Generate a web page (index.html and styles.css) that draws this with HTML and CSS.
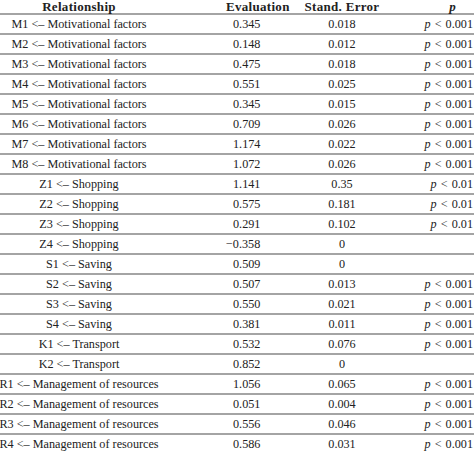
FILE: index.html
```html
<!DOCTYPE html>
<html>
<head>
<meta charset="utf-8">
<link rel="stylesheet" href="styles.css">
</head>
<body>
<div class="tbl">
  <div class="row head">
    <div class="c1"><span>Relationship</span></div>
    <div class="c2">Evaluation</div>
    <div class="c3"><span>Stand. Error</span></div>
    <div class="c4"><i>p</i></div>
  </div>
  <div class="row"><div class="c1"><span>M1 &lt;– Motivational factors</span></div><div class="c2">0.345</div><div class="c3"><span>0.018</span></div><div class="c4"><i>p</i> &lt; 0.001</div></div>
  <div class="row"><div class="c1"><span>M2 &lt;– Motivational factors</span></div><div class="c2">0.148</div><div class="c3"><span>0.012</span></div><div class="c4"><i>p</i> &lt; 0.001</div></div>
  <div class="row"><div class="c1"><span>M3 &lt;– Motivational factors</span></div><div class="c2">0.475</div><div class="c3"><span>0.018</span></div><div class="c4"><i>p</i> &lt; 0.001</div></div>
  <div class="row"><div class="c1"><span>M4 &lt;– Motivational factors</span></div><div class="c2">0.551</div><div class="c3"><span>0.025</span></div><div class="c4"><i>p</i> &lt; 0.001</div></div>
  <div class="row"><div class="c1"><span>M5 &lt;– Motivational factors</span></div><div class="c2">0.345</div><div class="c3"><span>0.015</span></div><div class="c4"><i>p</i> &lt; 0.001</div></div>
  <div class="row"><div class="c1"><span>M6 &lt;– Motivational factors</span></div><div class="c2">0.709</div><div class="c3"><span>0.026</span></div><div class="c4"><i>p</i> &lt; 0.001</div></div>
  <div class="row"><div class="c1"><span>M7 &lt;– Motivational factors</span></div><div class="c2">1.174</div><div class="c3"><span>0.022</span></div><div class="c4"><i>p</i> &lt; 0.001</div></div>
  <div class="row"><div class="c1"><span>M8 &lt;– Motivational factors</span></div><div class="c2">1.072</div><div class="c3"><span>0.026</span></div><div class="c4"><i>p</i> &lt; 0.001</div></div>
  <div class="row"><div class="c1"><span>Z1 &lt;– Shopping</span></div><div class="c2">1.141</div><div class="c3"><span>0.35</span></div><div class="c4"><i>p</i> &lt; 0.01</div></div>
  <div class="row"><div class="c1"><span>Z2 &lt;– Shopping</span></div><div class="c2">0.575</div><div class="c3"><span>0.181</span></div><div class="c4"><i>p</i> &lt; 0.01</div></div>
  <div class="row"><div class="c1"><span>Z3 &lt;– Shopping</span></div><div class="c2">0.291</div><div class="c3"><span>0.102</span></div><div class="c4"><i>p</i> &lt; 0.01</div></div>
  <div class="row"><div class="c1"><span>Z4 &lt;– Shopping</span></div><div class="c2"><span class="neg">−0.358</span></div><div class="c3"><span>0</span></div><div class="c4"></div></div>
  <div class="row"><div class="c1"><span>S1 &lt;– Saving</span></div><div class="c2">0.509</div><div class="c3"><span>0</span></div><div class="c4"></div></div>
  <div class="row"><div class="c1"><span>S2 &lt;– Saving</span></div><div class="c2">0.507</div><div class="c3"><span>0.013</span></div><div class="c4"><i>p</i> &lt; 0.001</div></div>
  <div class="row"><div class="c1"><span>S3 &lt;– Saving</span></div><div class="c2">0.550</div><div class="c3"><span>0.021</span></div><div class="c4"><i>p</i> &lt; 0.001</div></div>
  <div class="row"><div class="c1"><span>S4 &lt;– Saving</span></div><div class="c2">0.381</div><div class="c3"><span>0.011</span></div><div class="c4"><i>p</i> &lt; 0.001</div></div>
  <div class="row"><div class="c1"><span>K1 &lt;– Transport</span></div><div class="c2">0.532</div><div class="c3"><span>0.076</span></div><div class="c4"><i>p</i> &lt; 0.001</div></div>
  <div class="row"><div class="c1"><span>K2 &lt;– Transport</span></div><div class="c2">0.852</div><div class="c3"><span>0</span></div><div class="c4"></div></div>
  <div class="row"><div class="c1"><span>R1 &lt;– Management of resources</span></div><div class="c2">1.056</div><div class="c3"><span>0.065</span></div><div class="c4"><i>p</i> &lt; 0.001</div></div>
  <div class="row"><div class="c1"><span>R2 &lt;– Management of resources</span></div><div class="c2">0.051</div><div class="c3"><span>0.004</span></div><div class="c4"><i>p</i> &lt; 0.001</div></div>
  <div class="row"><div class="c1"><span>R3 &lt;– Management of resources</span></div><div class="c2">0.556</div><div class="c3"><span>0.046</span></div><div class="c4"><i>p</i> &lt; 0.001</div></div>
  <div class="row"><div class="c1"><span>R4 &lt;– Management of resources</span></div><div class="c2">0.586</div><div class="c3"><span>0.031</span></div><div class="c4"><i>p</i> &lt; 0.001</div></div>
</div>
</body>
</html>
```
FILE: styles.css
```css
html, body {
  margin: 0;
  padding: 0;
  background: #fff;
}
body {
  font-family: "Liberation Serif", "Times New Roman", serif;
  font-size: 12.2px;
  color: #222;
  overflow: hidden;
}
.tbl {
  width: 474px;
}
.row {
  display: flex;
  height: 18px;
  line-height: 18px;
  align-items: center;
  border-bottom: 2px solid #a4a4a4;
  white-space: nowrap;
}
.row.head {
  height: 13px;
  line-height: 13px;
  font-size: 13px;
  font-weight: bold;
  letter-spacing: 0.3px;
  align-items: flex-start;
}
.c1 {
  width: 158px;
  flex: none;
  display: flex;
  justify-content: center;
}
.c2 {
  width: 152px;
  flex: none;
  padding-left: 75px;
  box-sizing: border-box;
}
.head .c2 {
  padding-left: 68px;
}
.c3 {
  width: 64px;
  flex: none;
  display: flex;
  justify-content: center;
}
.c4 {
  flex: 1;
  text-align: right;
  padding-right: 1px;
  word-spacing: 1px;
}
.head .c4 {
  padding-right: 18px;
}
.neg {
  margin-left: -7px;
}
```
